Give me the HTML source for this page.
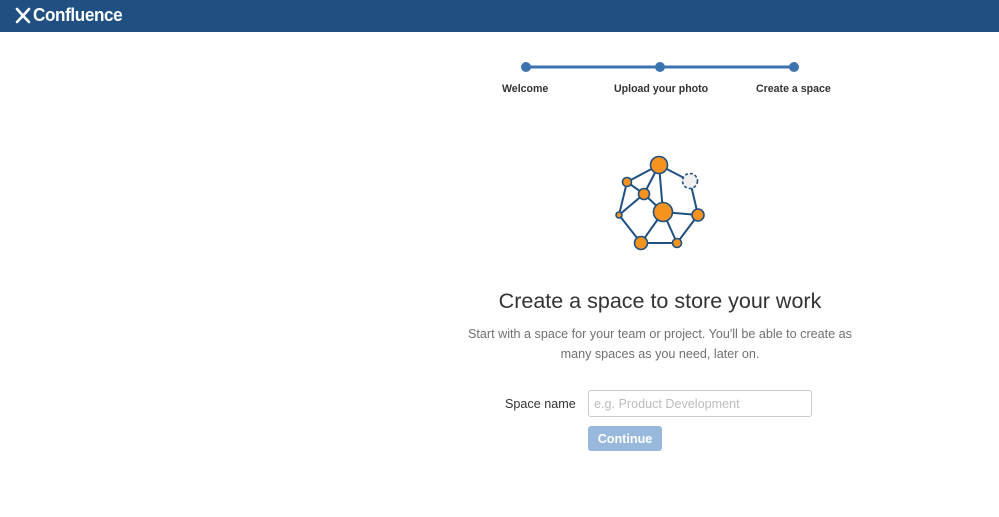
<!DOCTYPE html>
<html><head><meta charset="utf-8"><style>
body{margin:0;width:999px;height:517px;background:#fff;font-family:"Liberation Sans",Arial,sans-serif;position:relative;overflow:hidden}
.hdr{position:absolute;left:0;top:0;width:999px;height:32px;background:#205081}
.logo{position:absolute;left:33px;top:5px;color:#fff;font-weight:bold;font-size:18px;letter-spacing:-0.4px;transform:scaleX(0.95);transform-origin:left top}
.a{position:absolute;white-space:nowrap}
</style></head><body>
<div class="hdr">
<svg style="position:absolute;left:14px;top:7px" width="20" height="18" viewBox="0 0 20 18"><path d="M3 2 Q9 9 15 15 M15 2 Q9 9 3 15" stroke="#fff" stroke-width="2.6" fill="none" stroke-linecap="round"/></svg>
<div class="logo">Confluence</div>
</div>
<svg class="a" style="left:0;top:0" width="999" height="517">
<line x1="526" y1="67" x2="794" y2="67" stroke="#3b73af" stroke-width="3"/>
<circle cx="526" cy="67" r="5" fill="#3b73af"/><circle cx="660" cy="67" r="5" fill="#3b73af"/><circle cx="794" cy="67" r="5" fill="#3b73af"/>
<g stroke="#205081" stroke-width="2" fill="none">
<path d="M659 165L627 182M659 165L644 194M659 165L663 212M659 165L690 181M627 182L644 194M627 182L619 215M644 194L663 212M644 194L619 215M619 215L641 243M663 212L641 243M663 212L677 243M663 212L698 215M641 243L677 243M677 243L698 215M698 215L690 181"/>
</g>
<g fill="#f6921e" stroke="#205081" stroke-width="1.6">
<circle cx="659" cy="165" r="8.5"/><circle cx="627" cy="182" r="4.5"/><circle cx="644" cy="194" r="5.5"/><circle cx="619" cy="215" r="3"/><circle cx="663" cy="212" r="9.5"/><circle cx="698" cy="215" r="6"/><circle cx="641" cy="243" r="6.5"/><circle cx="677" cy="243" r="4.5"/>
</g>
<circle cx="690" cy="181" r="7.5" fill="#f0f0f0" stroke="#205081" stroke-width="1.6" stroke-dasharray="3 2"/>
</svg>
<div class="a" style="left:502px;top:83px;font-size:10.6px;font-weight:bold;color:#333">Welcome</div>
<div class="a" style="left:614px;top:83px;font-size:10.6px;font-weight:bold;color:#333">Upload your photo</div>
<div class="a" style="left:756px;top:83px;font-size:10.6px;font-weight:bold;color:#333">Create a space</div>
<div class="a" style="left:400px;width:520px;text-align:center;top:289px;font-size:21.5px;color:#333">Create a space to store your work</div>
<div class="a" style="left:400px;width:520px;text-align:center;top:324px;font-size:12.6px;line-height:20px;color:#707070;white-space:normal">Start with a space for your team or project. You'll be able to create as<br>many spaces as you need, later on.</div>
<div class="a" style="left:505px;top:397px;font-size:12.6px;color:#333">Space name</div>
<div class="a" style="left:588px;top:390px;width:222px;height:25px;border:1px solid #ccc;border-radius:3px"></div>
<div class="a" style="left:594px;top:397px;font-size:12.6px;color:#bbb">e.g. Product Development</div>
<div class="a" style="left:588px;top:426px;width:74px;height:25px;background:#99b9dc;border-radius:3px;color:#fff;font-weight:bold;font-size:12.6px;text-align:center;line-height:26px">Continue</div>
</body></html>
